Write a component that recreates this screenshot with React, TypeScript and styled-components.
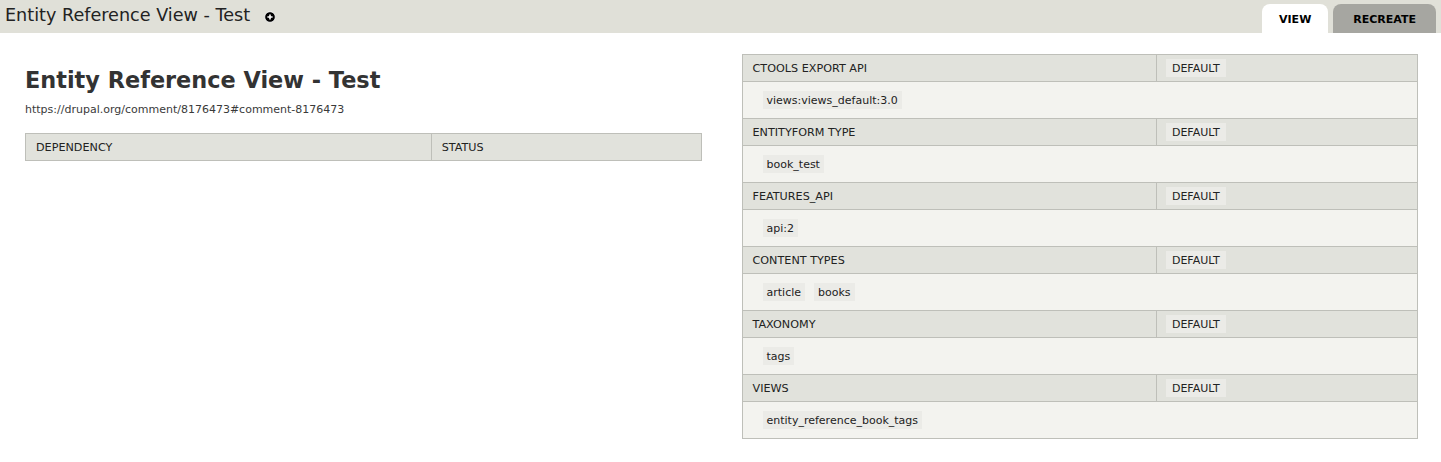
import React from "react";
import styled, { createGlobalStyle } from "styled-components";

const GlobalStyle = createGlobalStyle`
  html, body { margin: 0; padding: 0; background: #ffffff; }
  body {
    font-family: "DejaVu Sans", Verdana, sans-serif;
    color: #333333;
  }
  * { box-sizing: border-box; }
`;

const Page = styled.div`
  width: 1441px;
  min-height: 462px;
  background: #ffffff;
`;

const TopBar = styled.header`
  height: 33px;
  background: #e0e0d8;
  display: flex;
  align-items: flex-end;
  justify-content: space-between;
  padding: 0 5px;
`;

const TitleGroup = styled.div`
  align-self: stretch;
  display: flex;
  align-items: center;
  gap: 14px;
`;

const BarTitle = styled.span`
  font-size: 17.6px;
  line-height: 28px;
  color: #222222;
  margin-top: -3px;
`;

const Tabs = styled.nav`
  display: flex;
  align-items: flex-end;
  gap: 5px;
`;

const Tab = styled.a<{ $active?: boolean }>`
  display: flex;
  align-items: center;
  height: 29px;
  padding: 1px ${(p) => (p.$active ? "17px" : "20px")} 0;
  border-radius: 8px 8px 0 0;
  background: ${(p) => (p.$active ? "#ffffff" : "#a6a6a1")};
  color: #000000;
  font-size: 11px;
  font-weight: bold;
  text-transform: uppercase;
  text-decoration: none;
  cursor: pointer;
`;

const Content = styled.div`
  display: grid;
  grid-template-columns: 1fr 1fr;
  column-gap: 40px;
  padding: 21px 23px 0 25px;
  align-items: start;
`;

const Main = styled.section`
  padding-top: 12px;
  display: flex;
  flex-direction: column;
`;

const Heading = styled.h1`
  margin: 0;
  font-size: 22.4px;
  line-height: 28px;
  font-weight: bold;
  color: #333333;
`;

const Url = styled.div`
  margin-top: 8px;
  font-size: 11px;
  line-height: 16px;
  color: #3a3a3a;
`;

const Table = styled.div<{ $split: string }>`
  border: 1px solid #bebfb9;
  display: grid;
  grid-template-columns: ${(p) => p.$split} 1fr;
`;

const DepTable = styled(Table)`
  margin-top: 15px;
`;

const HeadCell = styled.div<{ $divider?: boolean }>`
  height: 26px;
  display: flex;
  align-items: center;
  padding: 0 10px;
  background: #e1e2dc;
  font-size: 11.2px;
  color: #222222;
  text-transform: uppercase;
  border-left: ${(p) => (p.$divider ? "1px solid #bebfb9" : "none")};
`;

const InfoHead = styled(HeadCell)`
  height: 27px;
  border-bottom: 1px solid #bebfb9;
`;

const BodyRow = styled.div`
  grid-column: 1 / -1;
  height: 37px;
  display: flex;
  align-items: center;
  gap: 9px;
  padding: 0 20px;
  background: #f3f3ef;
  border-bottom: 1px solid #bebfb9;

  &:last-child {
    height: 36px;
    border-bottom: none;
  }
`;

const Tag = styled.span`
  display: inline-flex;
  align-items: center;
  height: 18px;
  padding: 0 4px;
  background: #ebebe7;
  font-size: 11px;
  color: #222222;
`;

const HeadTag = styled(Tag)`
  margin-left: -1px;
  padding: 0 6px;
`;

const AddIcon = () => (
  <svg width="12" height="12" viewBox="0 0 12 12" aria-hidden="true">
    <circle cx="6" cy="6" r="5.3" fill="#000" stroke="#fff" strokeWidth="0.8" />
    <path d="M6 3.4v5.2M3.4 6h5.2" stroke="#fff" strokeWidth="1.6" />
  </svg>
);

type Group = { title: string; items: string[] };

const groups: Group[] = [
  { title: "CTOOLS EXPORT API", items: ["views:views_default:3.0"] },
  { title: "ENTITYFORM TYPE", items: ["book_test"] },
  { title: "FEATURES_API", items: ["api:2"] },
  { title: "CONTENT TYPES", items: ["article", "books"] },
  { title: "TAXONOMY", items: ["tags"] },
  { title: "VIEWS", items: ["entity_reference_book_tags"] },
];

export default function App() {
  return (
    <Page>
      <GlobalStyle />
      <TopBar>
        <TitleGroup>
          <BarTitle>Entity Reference View - Test</BarTitle>
          <AddIcon />
        </TitleGroup>
        <Tabs>
          <Tab $active>View</Tab>
          <Tab>Recreate</Tab>
        </Tabs>
      </TopBar>
      <Content>
        <Main>
          <Heading>Entity Reference View - Test</Heading>
          <Url>https://drupal.org/comment/8176473#comment-8176473</Url>
          <DepTable $split="60%">
            <HeadCell>Dependency</HeadCell>
            <HeadCell $divider>Status</HeadCell>
          </DepTable>
        </Main>
        <Table $split="61.3%">
          {groups.map((g) => (
            <React.Fragment key={g.title}>
              <InfoHead>{g.title}</InfoHead>
              <InfoHead $divider>
                <HeadTag>DEFAULT</HeadTag>
              </InfoHead>
              <BodyRow>
                {g.items.map((it) => (
                  <Tag key={it}>{it}</Tag>
                ))}
              </BodyRow>
            </React.Fragment>
          ))}
        </Table>
      </Content>
    </Page>
  );
}
